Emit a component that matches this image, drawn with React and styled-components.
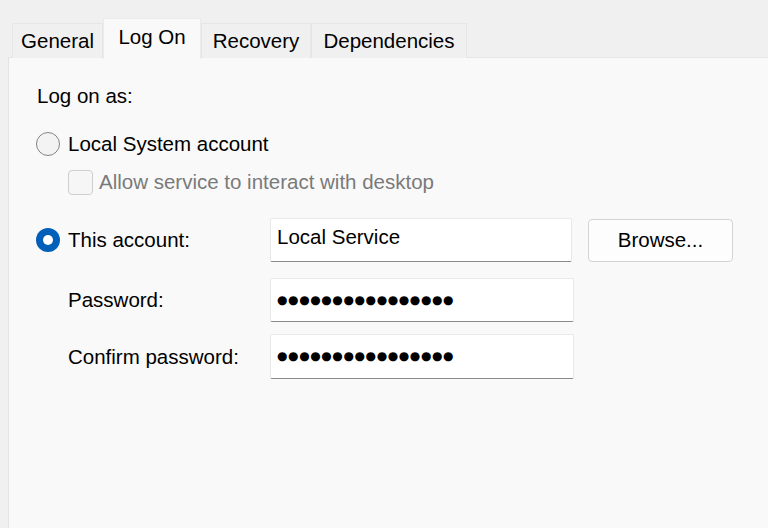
import styled, { createGlobalStyle } from "styled-components";

const GlobalStyle = createGlobalStyle`
  html, body {
    margin: 0;
    padding: 0;
    background: #f0f0f0;
    font-family: "Liberation Sans", Arial, sans-serif;
    color: #000;
  }
`;

const Window = styled.div`
  width: 768px;
  height: 528px;
  display: flex;
  flex-direction: column;
  overflow: hidden;
  padding-top: 17px;
  box-sizing: border-box;
`;

const TabBar = styled.div`
  display: flex;
  align-items: flex-end;
  padding-left: 12px;
  height: 41px;
  position: relative;
  z-index: 1;
`;

const Tab = styled.div`
  width: ${(p) => p.$width}px;
  height: ${(p) => (p.$active ? 41 : 35)}px;
  box-sizing: border-box;
  display: flex;
  justify-content: center;
  align-items: center;
  padding-bottom: ${(p) => (p.$active ? 5 : 0)}px;
  font-size: 20.5px;
  background: ${(p) => (p.$active ? "#f9f9f9" : "#f0f0f0")};
  border: 1px solid ${(p) => (p.$active ? "#ebebeb" : "#e6e6e6")};
  border-bottom: none;
  margin-bottom: ${(p) => (p.$active ? -1 : 0)}px;
`;

const Panel = styled.div`
  flex: 1;
  margin-left: 8px;
  margin-top: -1px;
  background: #f9f9f9;
  border-left: 1px solid #e3e3e3;
  border-top: 1px solid #e6e6e6;
  padding: 26px 0 0 27px;
  font-size: 20.5px;
`;

const Heading = styled.div`
  line-height: 24px;
  margin-left: 1px;
`;

const OptionRow = styled.div`
  display: flex;
  align-items: center;
  gap: 8px;
  height: 24px;
  margin-top: ${(p) => p.$top}px;
  margin-left: ${(p) => p.$indent || 0}px;
  color: ${(p) => (p.$disabled ? "#7a7a7a" : "#000")};
`;

const Radio = styled.span`
  width: 24px;
  height: 24px;
  flex: none;
  box-sizing: border-box;
  border-radius: 50%;
  display: flex;
  align-items: center;
  justify-content: center;
  background: ${(p) => (p.$checked ? "#005fb8" : "#f3f3f3")};
  border: ${(p) => (p.$checked ? "none" : "1.5px solid #858585")};
  &::after {
    content: "";
    display: ${(p) => (p.$checked ? "block" : "none")};
    width: 10px;
    height: 10px;
    border-radius: 50%;
    background: #fff;
  }
`;

const Checkbox = styled.span`
  width: 25px;
  height: 25px;
  flex: none;
  box-sizing: border-box;
  border-radius: 4px;
  border: 1px solid #cfcfcf;
  background: #f6f6f6;
  margin-right: -2px;
`;

const AccountForm = styled.div`
  display: flex;
  flex-direction: column;
  margin-top: 24px;
`;

const FieldRow = styled.div`
  display: flex;
  align-items: center;
  margin-top: ${(p) => p.$top}px;
`;

const Label = styled.div`
  width: 234px;
  flex: none;
  display: flex;
  align-items: center;
  gap: 8px;
  padding-left: ${(p) => (p.$indent ? 32 : 0)}px;
  box-sizing: border-box;
  line-height: 24px;
`;

const TextBox = styled.div`
  width: ${(p) => p.$width}px;
  height: ${(p) => p.$height || 44}px;
  box-sizing: border-box;
  background: #fff;
  border: 1px solid #e8e8e8;
  border-bottom: 1.5px solid #8a8a8a;
  border-radius: 2px;
  padding: 6px 0 0 6px;
  line-height: 24px;
`;

const Dots = styled.span`
  display: inline-block;
  font-family: "DejaVu Sans", sans-serif;
  font-size: 12px;
  letter-spacing: 0.6px;
  line-height: 26px;
`;

const Button = styled.div`
  width: 145px;
  height: 43px;
  box-sizing: border-box;
  margin-left: 16px;
  background: #fdfdfd;
  border: 1px solid #d4d4d4;
  border-radius: 4px;
  display: flex;
  align-items: center;
  justify-content: center;
`;

const tabs = [
  { name: "General", width: 91 },
  { name: "Log On", width: 98, active: true },
  { name: "Recovery", width: 110 },
  { name: "Dependencies", width: 156 },
];

const secret = "\u25CF".repeat(16);

export default function App() {
  return (
    <>
      <GlobalStyle />
      <Window>
        <TabBar>
          {tabs.map((t) => (
            <Tab key={t.name} $width={t.width} $active={t.active}>
              {t.name}
            </Tab>
          ))}
        </TabBar>
        <Panel>
          <Heading>Log on as:</Heading>
          <OptionRow $top={24}>
            <Radio />
            Local System account
          </OptionRow>
          <OptionRow $top={14} $indent={32} $disabled>
            <Checkbox />
            Allow service to interact with desktop
          </OptionRow>
          <AccountForm>
            <FieldRow $top={0}>
              <Label>
                <Radio $checked />
                This account:
              </Label>
              <TextBox $width={302}>Local Service</TextBox>
              <Button>Browse...</Button>
            </FieldRow>
            <FieldRow $top={16}>
              <Label $indent>Password:</Label>
              <TextBox $width={304}>
                <Dots>{secret}</Dots>
              </TextBox>
            </FieldRow>
            <FieldRow $top={12}>
              <Label $indent>Confirm password:</Label>
              <TextBox $width={304} $height={45}>
                <Dots>{secret}</Dots>
              </TextBox>
            </FieldRow>
          </AccountForm>
        </Panel>
      </Window>
    </>
  );
}
